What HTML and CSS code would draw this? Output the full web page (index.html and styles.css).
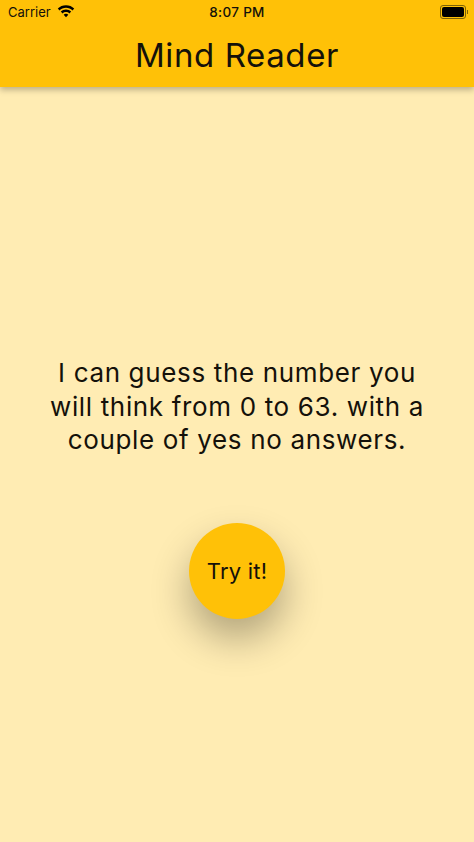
FILE: index.html
```html
<!DOCTYPE html>
<html lang="en">
<head>
    <meta charset="UTF-8">
    <meta name="viewport" content="width=device-width, initial-scale=1.0">
    <title>Mind Reader</title>
    <link rel="stylesheet" href="styles.css">
</head>
<body>
    <header class="app-bar">
        <div class="status-bar">
            <div class="status-left">
                <span>Carrier</span>
                <svg class="wifi" viewBox="0 0 18 13" width="18" height="13">
                    <path d="M9 2.800c2.500 0 4.800 1 6.500 2.600l1.700-1.800C15.100 1.500 12.200.3 9 .3S2.900 1.500.8 3.600l1.700 1.800C4.200 3.800 6.500 2.800 9 2.800z"/>
                    <path d="M9 7c1.300 0 2.500.5 3.400 1.400l1.800-1.800C12.800 5.200 11 4.400 9 4.400s-3.800.8-5.200 2.200l1.800 1.800C6.500 7.500 7.700 7 9 7z"/>
                    <path d="M9 8.700c-.9 0-1.700.4-2.300 1L9 12.300l2.300-2.600c-.6-.6-1.400-1-2.300-1z"/>
                </svg>
            </div>
            <span class="status-time">8:07 PM</span>
            <div class="status-right">
                <div class="battery"><div class="battery-level"></div></div>
                <div class="battery-cap"></div>
            </div>
        </div>
        <h1>Mind Reader</h1>
    </header>
    <main class="content">
        <p class="intro">I can guess the number you will think from 0 to 63. with a couple of yes no answers.</p>
        <button class="try-button" type="button">Try it!</button>
    </main>
</body>
</html>
```

FILE: styles.css
```css
html, body {
    height: 100%;
}

body {
    margin: 0;
    display: flex;
    flex-direction: column;
    font-family: 'Inter', 'Liberation Sans', sans-serif;
    color: #14110a;
    background: #FFECB3;
    overflow: hidden;
}

.app-bar {
    height: 87px;
    flex-shrink: 0;
    background: #FFC107;
    box-shadow: 0 3px 6px rgba(0, 0, 0, 0.25);
}

.status-bar {
    height: 24px;
    display: grid;
    grid-template-columns: 1fr auto 1fr;
    align-items: center;
    padding: 0 6px 0 8px;
    font-size: 13px;
}

.status-left {
    display: flex;
    align-items: center;
    gap: 6px;
}

.wifi {
    margin-top: -2px;
}

.status-time {
    font-size: 13.500px;
    font-weight: 500;
    letter-spacing: 0.300px;
    margin-right: 2px;
}

.status-right {
    display: flex;
    align-items: center;
    justify-content: flex-end;
}

.battery {
    width: 22px;
    height: 10px;
    padding: 1px;
    border: 1px solid #7d6206;
    border-radius: 3px;
}

.battery-level {
    height: 100%;
    background: #000;
    border-radius: 2px;
}

.battery-cap {
    width: 1px;
    height: 4px;
    background: #7d6206;
    margin-left: 1px;
}

.app-bar h1 {
    margin: 9px 0 0;
    font-size: 33px;
    line-height: 44px;
    font-weight: 400;
    letter-spacing: 0.600px;
    text-align: center;
}

.content {
    flex: 1;
    display: flex;
    flex-direction: column;
    align-items: center;
    padding-top: 269px;
}

.intro {
    margin: 0;
    width: 390px;
    font-size: 26px;
    line-height: 33.500px;
    font-weight: 400;
    letter-spacing: 0.650px;
    text-align: center;
}

.try-button {
    width: 96px;
    height: 96px;
    margin-top: 66px;
    border: none;
    border-radius: 50%;
    font-family: inherit;
    font-size: 22px;
    letter-spacing: 0.200px;
    color: #14110a;
    background: #FFC107;
    box-shadow: 0 20px 38px rgba(0, 0, 0, 0.3);
}
```
